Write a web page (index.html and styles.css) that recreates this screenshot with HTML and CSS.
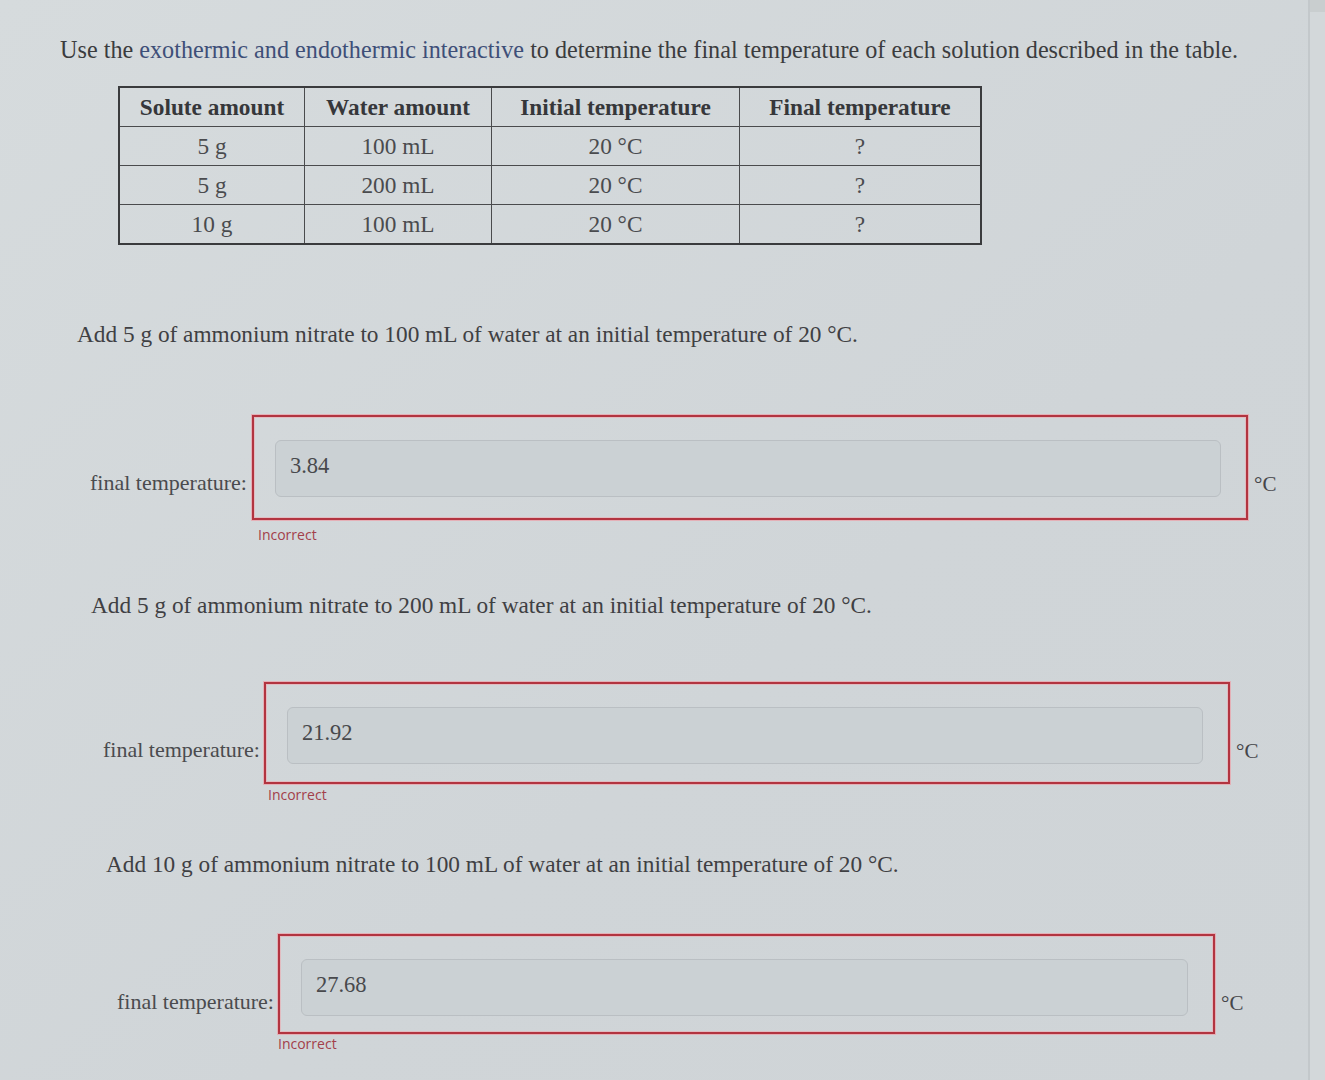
FILE: index.html
```html
<!DOCTYPE html>
<html>
<head>
<meta charset="utf-8">
<link rel="stylesheet" href="styles.css">
</head>
<body>
<div class="screen">
  <div class="panel">
    <p class="title">Use the <span class="link">exothermic and endothermic interactive</span> to determine the final temperature of each solution described in the table.</p>
    <table class="data">
      <thead>
        <tr><th class="c1">Solute amount</th><th class="c2">Water amount</th><th class="c3">Initial temperature</th><th class="c4">Final temperature</th></tr>
      </thead>
      <tbody>
        <tr><td>5 g</td><td>100 mL</td><td>20 °C</td><td>?</td></tr>
        <tr><td>5 g</td><td>200 mL</td><td>20 °C</td><td>?</td></tr>
        <tr><td>10 g</td><td>100 mL</td><td>20 °C</td><td>?</td></tr>
      </tbody>
    </table>

    <section class="q q1">
      <p class="stmt">Add 5 g of ammonium nitrate to 100 mL of water at an initial temperature of 20 °C.</p>
      <div class="answer">
        <span class="label">final temperature:</span>
        <div class="box"><div class="field">3.84</div></div>
        <span class="unit">°C</span>
      </div>
      <div class="feedback">Incorrect</div>
    </section>

    <section class="q q2">
      <p class="stmt">Add 5 g of ammonium nitrate to 200 mL of water at an initial temperature of 20 °C.</p>
      <div class="answer">
        <span class="label">final temperature:</span>
        <div class="box"><div class="field">21.92</div></div>
        <span class="unit">°C</span>
      </div>
      <div class="feedback">Incorrect</div>
    </section>

    <section class="q q3">
      <p class="stmt">Add 10 g of ammonium nitrate to 100 mL of water at an initial temperature of 20 °C.</p>
      <div class="answer">
        <span class="label">final temperature:</span>
        <div class="box"><div class="field">27.68</div></div>
        <span class="unit">°C</span>
      </div>
      <div class="feedback">Incorrect</div>
    </section>
  </div>
</div>
</body>
</html>
```

FILE: styles.css
```css
html, body {
  margin: 0;
  padding: 0;
}
body {
  background: #cdd2d5;
  font-family: "Liberation Serif", "Times New Roman", serif;
  color: #3c3d3f;
}
.screen {
  width: 1325px;
  height: 1080px;
  overflow: hidden;
  background: linear-gradient(to bottom, #c9cecf 0, #c9cecf 12px, #d3d8da 12px);
}
.panel {
  width: 1310px;
  height: 1080px;
  padding-top: 35px;
  box-sizing: border-box;
  background: linear-gradient(to bottom right, #d6dbdd, #d0d5d8 60%, #cfd4d7);
  border-right: 2px solid #c3c8cb;
}
.title {
  margin: 0 0 0 60px;
  font-size: 24.2px;
  line-height: 30px;
  color: #3b3c3e;
  white-space: nowrap;
}
.link {
  color: #3e4f78;
}
.data {
  margin: 21px 0 0 118px;
  border-collapse: collapse;
  border: 2px solid #3a3b3d;
  font-size: 23.3px;
  color: #3a3b3d;
}
.data th, .data td {
  border: 1.5px solid #4a4b4d;
  height: 38px;
  padding: 0;
  text-align: center;
  line-height: 24px;
}
.data th {
  font-weight: bold;
  color: #36373a;
}
.data td {
  color: #4a4b4e;
}
.c1 { width: 184px; }
.c2 { width: 186px; }
.c3 { width: 247px; }
.c4 { width: 240px; }

.q .stmt {
  margin: 0;
  font-size: 23.3px;
  line-height: 26px;
  color: #3f4043;
  white-space: nowrap;
}
.answer {
  display: flex;
  align-items: flex-start;
}
.label {
  font-size: 22px;
  line-height: 24px;
  color: #4a4b4e;
  padding-top: 56px;
  white-space: nowrap;
}
.box {
  box-sizing: border-box;
  height: 105px;
  border: 2px solid #b23440;
  box-shadow: 0 0 0 1px rgba(236, 160, 168, 0.7), inset 0 0 0 1px rgba(236, 170, 176, 0.6);
  padding: 23px 25px 0 21px;
  margin-left: 5px;
}
.field {
  box-sizing: border-box;
  height: 57px;
  background: #cbd1d4;
  border: 1.5px solid #babfc3;
  border-radius: 6px;
  padding: 13px 0 0 14px;
  font-size: 22.5px;
  line-height: 24px;
  color: #48494c;
}
.unit {
  font-size: 21px;
  line-height: 24px;
  padding-top: 57px;
  margin-left: 6px;
  color: #45464a;
}
.feedback {
  font-family: "Open Sans", "Liberation Sans", sans-serif;
  font-size: 14px;
  line-height: 18px;
  color: #a3404a;
}

.q1 { margin: 76px 0 0 77px; }
.q1 .answer { margin: 68px 0 0 13px; }
.q1 .box { width: 996px; }
.q1 .feedback { margin: 6px 0 0 181px; }

.q2 { margin: 48px 0 0 91px; }
.q2 .answer { margin: 64px 0 0 12px; }
.q2 .box { width: 966px; height: 102px; margin-left: 4px; }
.q2 .feedback { margin: 2px 0 0 177px; }

.q3 { margin: 47px 0 0 106px; }
.q3 .answer { margin: 57px 0 0 11px; }
.q3 .box { width: 937px; height: 100px; margin-left: 4px; }
.q3 .feedback { margin: 1px 0 0 172px; }
```
